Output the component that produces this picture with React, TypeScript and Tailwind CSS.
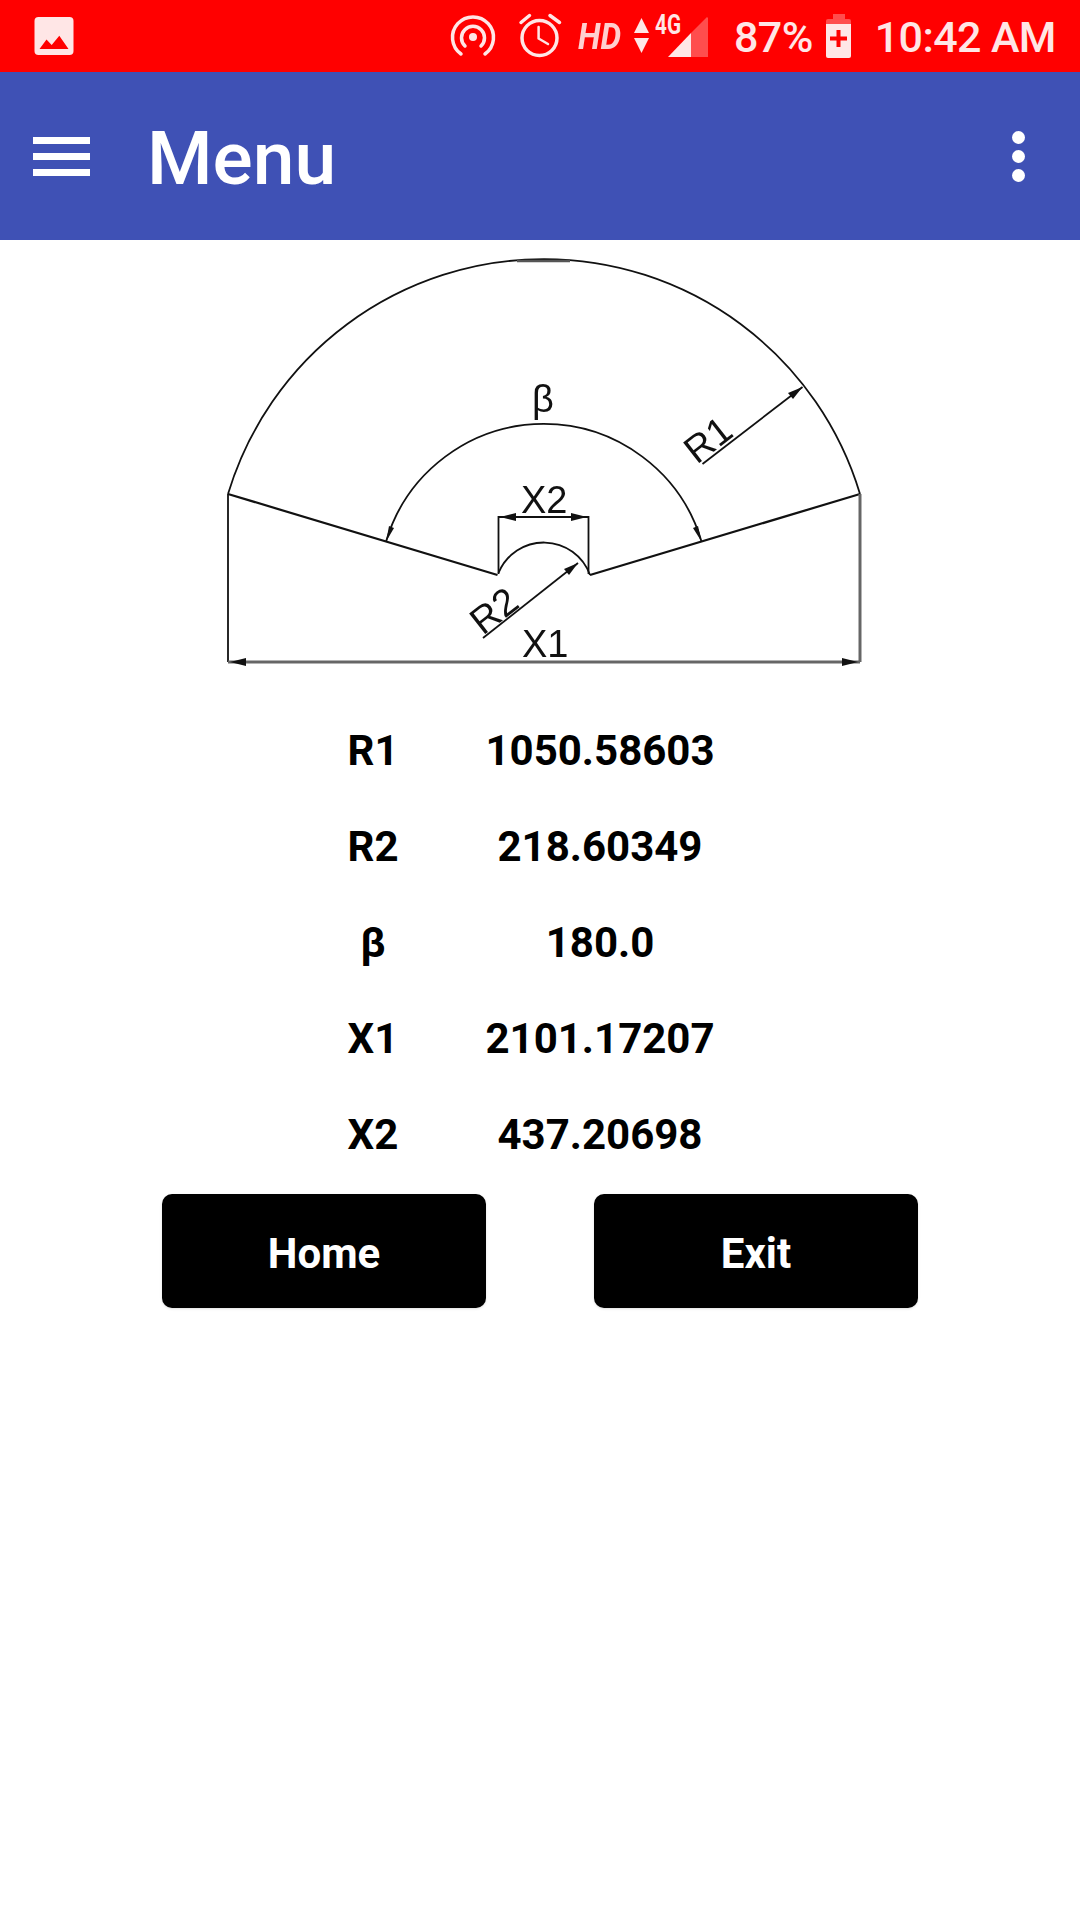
import React from "react";

const rows = [
  { label: "R1", value: "1050.58603" },
  { label: "R2", value: "218.60349" },
  { label: "β", value: "180.0" },
  { label: "X1", value: "2101.17207" },
  { label: "X2", value: "437.20698" },
];

const StatusIcons = () => (
  <>
    {/* hotspot */}
    <svg className="ml-[375px]" width="48" height="46" viewBox="449 14 48 46" fill="none" stroke="#ffe6e6" strokeWidth="3.5" strokeLinecap="round">
      <circle cx="473" cy="38" r="4" fill="#ffe6e6" stroke="none" />
      <path d="M465 47A11.5 11.5 0 1 1 481 47" />
      <path d="M461 55A20.5 20.5 0 1 1 485 55" />
    </svg>
    {/* alarm */}
    <svg className="ml-[21px]" width="44" height="46" viewBox="518 14 44 46" fill="none" stroke="#ffe6e6" strokeLinecap="round" strokeLinejoin="round">
      <circle cx="539.5" cy="39" r="17.5" strokeWidth="3.5" />
      <path d="M521 23.5L529.5 16.5M550 16.5L559.5 23.5" strokeWidth="3.5" />
      <path d="M538.6 28V39.5L548 45" strokeWidth="2.5" />
    </svg>
    {/* HD, arrows, 4G and signal */}
    <svg className="ml-[14px]" width="134" height="66" viewBox="576 3 134 66" fill="#ffe6e6">
      <text x="578" y="49" textLength="43" lengthAdjust="spacingAndGlyphs" fontSize="36" fontWeight="700" fontStyle="italic" opacity="0.9">HD</text>
      <polygon points="641.5,18 649,33 634,33" />
      <polygon points="634,38 649,38 641.5,53" />
      <polygon points="668,57 691,33 691,57" />
      <polygon points="691,33 707,17 708,18 708,57 691,57" fill="#ff4d4d" />
      <text x="655" y="34" textLength="26" lengthAdjust="spacingAndGlyphs" fontSize="27" fontWeight="700">4G</text>
    </svg>
    <span className="ml-[24px] mt-[3px] text-[43px] leading-none font-medium tracking-[-0.6px] text-[#ffe6e6]">87%</span>
    {/* battery */}
    <svg className="ml-[13px]" width="25" height="44" viewBox="826 14 25 44">
      <rect x="833" y="14" width="12" height="6" fill="#ff4d4d" />
      <path d="M826 24V21Q826 19 828 19H849Q851 19 851 21V24Z" fill="#ff4d4d" />
      <path d="M826 24H851V56Q851 58 849 58H828Q826 58 826 56Z" fill="#ffe6e6" />
      <path d="M838.5 30V47M830 38.5H847" stroke="#ff0000" strokeWidth="4" />
    </svg>
    <span className="ml-[24px] mt-[3px] text-[43px] leading-none font-medium tracking-[-0.6px] text-[#ffe6e6] whitespace-nowrap">10:42 AM</span>
  </>
);

const Diagram = () => (
  <svg
    className="ml-[224px] mt-4 blur-[0.5px] font-['Liberation_Sans',sans-serif]"
    width="640"
    height="410"
    viewBox="224 256 640 410"
    fill="none"
    stroke="#111"
    strokeWidth="1.8"
  >
    <path d="M228 494A330 330 0 0 1 860 494" />
    <path d="M517 261H570" stroke="#555" strokeWidth="2.5" />
    <path d="M386 541.7A164.6 164.6 0 0 1 701.6 541.7" />
    <path d="M228 494L497.5 575M860 494L590 575" strokeWidth="2.2" />
    <path d="M228 494V662" />
    <path d="M860 494V662" stroke="#666" strokeWidth="3" />
    <path d="M228 662H860" stroke="#666" strokeWidth="3" />
    <path d="M498.5 574V517H588.5V574" />
    <path d="M498.5 573A49 49 0 0 1 590 575" />
    <path d="M483 638L578 563" />
    <path d="M702.5 464L802.5 387" />
    <g fill="#111" stroke="none">
      <polygon points="230,662 246,658 246,666" />
      <polygon points="858,662 842,658 842,666" />
      <polygon points="500,517 516,513 516,521" />
      <polygon points="587,517 571,513 571,521" />
      <polygon points="578,563 569,575 564,569" />
      <polygon points="802.5,387 793,399 788,393" />
      <polygon points="386,541.7 389,526 394,528" />
      <polygon points="701.6,541.7 693,528 698,526" />
    </g>
    <g fill="#111" stroke="none" fontSize="38">
      <text x="521" y="513">X2</text>
      <text x="522" y="657">X1</text>
      <text x="532" y="412">β</text>
      <text x="0" y="0" textAnchor="middle" transform="translate(716 450) rotate(-38)">R1</text>
      <text x="0" y="0" textAnchor="middle" transform="translate(502 621) rotate(-38)">R2</text>
    </g>
  </svg>
);

const App = () => {
  return (
    <div className="w-[1080px] h-[1920px] bg-white flex flex-col font-['Roboto',sans-serif]">
      <div className="h-[72px] bg-[#ff0000] flex items-center overflow-hidden">
        <svg className="ml-[34px]" width="40" height="38" viewBox="34 17 40 38">
          <rect x="34.5" y="17" width="39" height="38" rx="4" fill="#ffe6e6" />
          <polygon points="39.5,49 46.5,39.5 51.7,45 59.3,35.7 68.5,49" fill="#ff0000" />
        </svg>
        <StatusIcons />
      </div>
      <div className="h-[168px] bg-[#3f51b5] flex items-center pl-[33px] pr-[55px]">
        <div className="flex flex-col gap-[9px]">
          <div className="w-[57px] h-[7px] bg-white"></div>
          <div className="w-[57px] h-[7px] bg-white"></div>
          <div className="w-[57px] h-[7px] bg-white"></div>
        </div>
        <span className="ml-[57px] mt-[4px] text-[75px] leading-none font-medium text-white">Menu</span>
        <div className="ml-auto flex flex-col gap-[6px]">
          <div className="w-[13px] h-[13px] rounded-full bg-white"></div>
          <div className="w-[13px] h-[13px] rounded-full bg-white"></div>
          <div className="w-[13px] h-[13px] rounded-full bg-white"></div>
        </div>
      </div>
      <Diagram />
      <div className="mt-[36px] ml-[273px] w-[454px] grid grid-cols-[200px_254px] text-[42px] font-bold text-black">
        {rows.map((row) => (
          <React.Fragment key={row.label}>
            <div className="h-[96px] flex items-center justify-center">{row.label}</div>
            <div className="h-[96px] flex items-center justify-center">{row.value}</div>
          </React.Fragment>
        ))}
      </div>
      <div className="mt-[12px] ml-[162px] flex gap-[108px]">
        <button className="w-[324px] h-[114px] pt-[5px] bg-black text-white text-[42px] font-bold rounded-[10px] shadow-sm">Home</button>
        <button className="w-[324px] h-[114px] pt-[5px] bg-black text-white text-[42px] font-bold rounded-[10px] shadow-sm">Exit</button>
      </div>
    </div>
  );
};

export default App;
